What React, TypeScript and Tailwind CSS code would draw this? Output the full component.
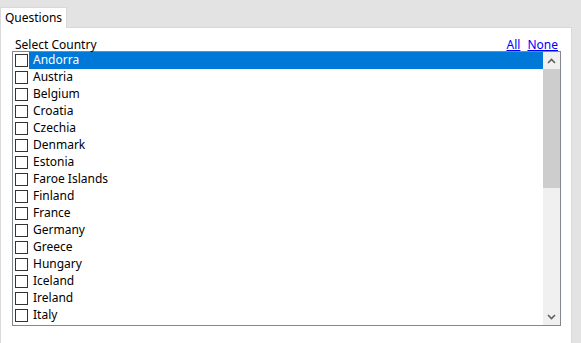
import type { ReactNode } from "react";

const countries = [
  "Andorra",
  "Austria",
  "Belgium",
  "Croatia",
  "Czechia",
  "Denmark",
  "Estonia",
  "Faroe Islands",
  "Finland",
  "France",
  "Germany",
  "Greece",
  "Hungary",
  "Iceland",
  "Ireland",
  "Italy"
];

function Chevron({ up }: { up?: boolean }) {
  return (
    <svg width="9" height="6" viewBox="0 0 9 6" className="text-[#606060]">
      <path d={up ? "M1 5 L4.5 1.5 L8 5" : "M1 1 L4.5 4.5 L8 1"} fill="none" stroke="currentColor" strokeWidth="1.6" />
    </svg>
  );
}

function Row({ label, selected }: { label: string; selected?: boolean }): ReactNode {
  return (
    <div className="flex h-[17px] items-center">
      <span className="ml-[2px] mr-px h-[13px] w-[13px] shrink-0 border border-[#333] bg-white" />
      <span
        className={
          "flex h-[17px] flex-1 items-center pb-px pl-[4px] " +
          (selected ? "bg-[#0078d7] text-white" : "text-black")
        }
      >
        {label}
      </span>
    </div>
  );
}

export default function App() {
  return (
    <div
      className="h-[343px] w-[581px] overflow-hidden bg-[#e3e3e3] pt-[7px] text-[12px] leading-none text-black"
      style={{ fontFamily: '"Noto Sans", "Liberation Sans", sans-serif' }}
    >
      <div className="flex">
        <div className="relative z-10 -mb-px flex h-[21px] w-[67px] items-center justify-center border border-b-0 border-[#d9d9d9] bg-white">
          Questions
        </div>
      </div>
      <div className="h-[320px] w-[572px] border border-[#d9d9d9] bg-white pl-[11px] pr-[10px] pt-[10px]">
        <div className="flex h-[13px] items-center justify-between">
          <span className="pl-[3px]">Select Country</span>
          <div className="flex gap-[7px] pr-[3px] text-[#0000ff] underline">
            <span>All</span>
            <span>None</span>
          </div>
        </div>
        <div className="flex h-[275px] border border-[#828790]">
          <div className="flex-1">
            {countries.map((c, i) => (
              <Row key={c} label={c} selected={i === 0} />
            ))}
          </div>
          <div className="flex w-[17px] flex-col bg-[#f0f0f0]">
            <div className="flex h-[17px] items-center justify-center">
              <Chevron up />
            </div>
            <div className="h-[119px] bg-[#cdcdcd]" />
            <div className="flex-1" />
            <div className="flex h-[17px] items-center justify-center">
              <Chevron />
            </div>
          </div>
        </div>
      </div>
    </div>
  );
}
